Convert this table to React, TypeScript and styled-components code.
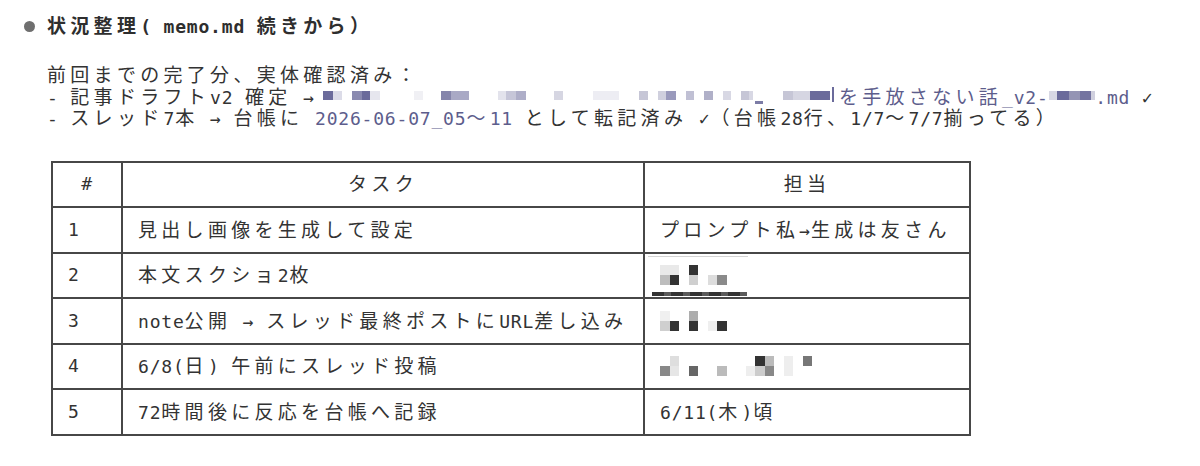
import React from 'react';
import styled, { createGlobalStyle } from 'styled-components';

const Global = createGlobalStyle`
  html, body { margin: 0; padding: 0; background: #ffffff; }
  body {
    color: #333333;
    font-family: "DejaVu Sans Mono", "Noto Sans CJK JP", monospace;
    font-size: 18px;
  }
`;

const WIDE = /[\u1100-\u115F\u2E80-\u303E\u3040-\uA4CF\uAC00-\uD7A3\uF900-\uFAFF\uFE30-\uFE4F\uFF00-\uFF60\uFFE0-\uFFE6]/;

const Wide = styled.span`
  font-family: "Noto Sans CJK JP", "Noto Sans CJK SC", sans-serif;
  font-size: 19px;
  letter-spacing: 4.3px;
`;

const Narrow = styled.span`
  font-family: "DejaVu Sans Mono", "Liberation Mono", monospace;
  font-size: 18px;
  letter-spacing: 0.81px;
`;

function T({ s }: { s: string }) {
  const runs: { w: boolean; t: string }[] = [];
  for (const ch of s) {
    const w = WIDE.test(ch);
    const last = runs[runs.length - 1];
    if (last && last.w === w) last.t += ch;
    else runs.push({ w, t: ch });
  }
  return (
    <>
      {runs.map((r, i) =>
        r.w ? <Wide key={i}>{r.t}</Wide> : <Narrow key={i}>{r.t}</Narrow>
      )}
    </>
  );
}

const Page = styled.div`
  padding-top: 15px;
  white-space: pre;
`;

const Heading = styled.div`
  display: flex;
  align-items: center;
  height: 22px;
  line-height: 22px;
  padding-left: 24px;
  font-weight: 700;
  color: #2e2e2e;
`;

const Bullet = styled.span`
  width: 11px;
  height: 11px;
  border-radius: 50%;
  background: #6f6f6f;
  margin-right: 12px;
  flex: none;
`;

const Block = styled.div`
  margin-top: 26px;
  padding-left: 47px;
`;

const Line = styled.div`
  height: 21.5px;
  line-height: 21.5px;
`;

const Path = styled.span`
  color: #5d5d8c;
`;

const Redact = styled.span<{ $w: number }>`
  display: inline-flex;
  align-items: flex-start;
  width: ${(p) => p.$w}px;
  height: 9px;
  vertical-align: 4px;
`;

const Px = styled.span<{ $w: number; $c?: string; $tall?: boolean; $low?: boolean }>`
  flex: none;
  width: ${(p) => p.$w}px;
  height: ${(p) => (p.$tall ? 15 : p.$low ? 3 : 9)}px;
  margin-top: ${(p) => (p.$tall ? -4 : p.$low ? 10 : 0)}px;
  background: ${(p) => p.$c || 'transparent'};
`;

type Seg = [number, string?, ('tall' | 'low')?];

const redactA: Seg[] = [
  [8], [10, '#6b6b9b'], [9, '#dcdce8'], [10], [10, '#8a8ab0'], [8, '#6b6b9b'], [10, '#e6e6ee'],
  [34], [9, '#f0f0f4'], [18], [10, '#8585ab'], [18, '#a9a9c5'], [29], [8, '#e3e3ec'],
  [10, '#c6c6d8'], [10, '#aeaec8'], [28], [9, '#d6d6e2'], [30], [26, '#ededf3'], [20],
  [9, '#c6c6d6'], [10], [8, '#d0d0de'], [10, '#9a9abc'], [10], [8, '#c0c0d4'], [10],
  [9, '#b0b0c8'], [10], [8, '#d8d8e4'], [10], [8, '#c6c6d6'], [4, '#d8d8e4'], [2],
  [8, '#7c7ca6', 'low'], [20], [10, '#c6c6d6'], [17, '#d6d6e2'], [20, '#6b6b9b'], [2],
  [2, '#6b6b9b', 'tall'], [5],
];

const redactB: Seg[] = [
  [8, '#d8d8e4'], [12, '#6b6b9b'], [11, '#9494b4'], [11, '#7474a0'], [4.6, '#d0d0de'],
];

function Redaction({ segs }: { segs: Seg[] }) {
  const total = segs.reduce((a, s) => a + s[0], 0);
  return (
    <Redact $w={total}>
      {segs.map((s, i) => (
        <Px key={i} $w={s[0]} $c={s[1]} $tall={s[2] === 'tall'} $low={s[2] === 'low'} />
      ))}
    </Redact>
  );
}

const Table = styled.table`
  border-collapse: collapse;
  table-layout: fixed;
  width: 920px;
  margin: 33px 0 0 51px;
`;

const Col = styled.col<{ $w: number }>`
  width: ${(p) => p.$w}px;
`;

const Row = styled.tr`
  height: 45.5px;
`;

const Head = styled.th`
  border: 2px solid #474747;
  padding: 0 15px;
  font-weight: 400;
  text-align: center;
  vertical-align: middle;
  line-height: 22px;
  white-space: nowrap;
  color: #333;
`;

const Cell = styled.td<{ $decor?: boolean }>`
  border: 2px solid #474747;
  padding: 0 15px;
  text-align: left;
  vertical-align: middle;
  line-height: 22px;
  white-space: nowrap;
  color: #333;
  position: relative;

  ${(p) =>
    p.$decor &&
    `
    &::before {
      content: '';
      position: absolute;
      left: 3px;
      top: 2px;
      width: 100px;
      height: 1px;
      background: #d4d4d4;
    }
    &::after {
      content: '';
      position: absolute;
      left: 7px;
      bottom: 1px;
      width: 95px;
      height: 4px;
      background: repeating-linear-gradient(90deg, #333 0 12px, #5a5a5a 12px 19px);
    }
  `}
`;

const Mosaic = styled.div<{ $cols: number }>`
  display: grid;
  grid-template-columns: repeat(${(p) => p.$cols}, 9.5px);
  grid-auto-rows: 10px;
`;

const Tile = styled.span<{ $c: string }>`
  background: ${(p) => p.$c || 'transparent'};
`;

function MosaicBlock({ rows }: { rows: string[][] }) {
  const cols = Math.max(...rows.map((r) => r.length));
  return (
    <Mosaic $cols={cols}>
      {rows.flatMap((r, ri) =>
        Array.from({ length: cols }, (_, ci) => <Tile key={`${ri}-${ci}`} $c={r[ci] || ''} />)
      )}
    </Mosaic>
  );
}

const mosaic2 = [
  ['#e9e9e9', '#e9e9e9', '', '#333'],
  ['#bdbdbd', '#333', '', '#cfcfcf', '', '#dddddd', '#8a8a8a'],
];
const mosaic3 = [
  ['#f0f0f0', '', '', '#adadad'],
  ['#cfcfcf', '#333', '', '#333', '', '#efefef', '#333'],
];
const mosaic4 = [
  ['', '#dedede', '', '', '', '', '', '', '', '', '#333', '#bbbbbb', '', '#eeeeee', '', '#777'],
  ['#888', '#e6e6e6', '', '#666', '', '', '#bbbbbb', '', '', '#eeeeee', '#cccccc', '#888', '', '#eeeeee'],
];

export default function App() {
  return (
    <>
      <Global />
      <Page>
        <Heading>
          <Bullet />
          <span>
            <T s="状況整理( memo.md 続きから）" />
          </span>
        </Heading>
        <Block>
          <Line>
            <T s="前回までの完了分、実体確認済み：" />
          </Line>
          <Line>
            <T s="- 記事ドラフトv2 確定 →" />
            <Path>
              <Redaction segs={redactA} />
              <T s="を手放さない話_v2-" />
              <Redaction segs={redactB} />
              <T s=".md" />
            </Path>
            <T s=" ✓" />
          </Line>
          <Line>
            <T s="- スレッド7本 → 台帳に " />
            <Path>
              <T s="2026-06-07_05～11" />
            </Path>
            <T s=" として転記済み ✓（台帳28行、1/7～7/7揃ってる）" />
          </Line>
        </Block>
        <Table>
          <colgroup>
            <Col $w={70} />
            <Col $w={522} />
            <Col $w={326} />
          </colgroup>
          <thead>
            <Row>
              <Head><T s="#" /></Head>
              <Head><T s="タスク" /></Head>
              <Head><T s="担当" /></Head>
            </Row>
          </thead>
          <tbody>
            <Row>
              <Cell><T s="1" /></Cell>
              <Cell><T s="見出し画像を生成して設定" /></Cell>
              <Cell><T s="プロンプト私→生成は友さん" /></Cell>
            </Row>
            <Row>
              <Cell><T s="2" /></Cell>
              <Cell><T s="本文スクショ2枚" /></Cell>
              <Cell $decor><MosaicBlock rows={mosaic2} /></Cell>
            </Row>
            <Row>
              <Cell><T s="3" /></Cell>
              <Cell><T s="note公開 → スレッド最終ポストにURL差し込み" /></Cell>
              <Cell><MosaicBlock rows={mosaic3} /></Cell>
            </Row>
            <Row>
              <Cell><T s="4" /></Cell>
              <Cell><T s="6/8(日) 午前にスレッド投稿" /></Cell>
              <Cell><MosaicBlock rows={mosaic4} /></Cell>
            </Row>
            <Row>
              <Cell><T s="5" /></Cell>
              <Cell><T s="72時間後に反応を台帳へ記録" /></Cell>
              <Cell><T s="6/11(木)頃" /></Cell>
            </Row>
          </tbody>
        </Table>
      </Page>
    </>
  );
}
